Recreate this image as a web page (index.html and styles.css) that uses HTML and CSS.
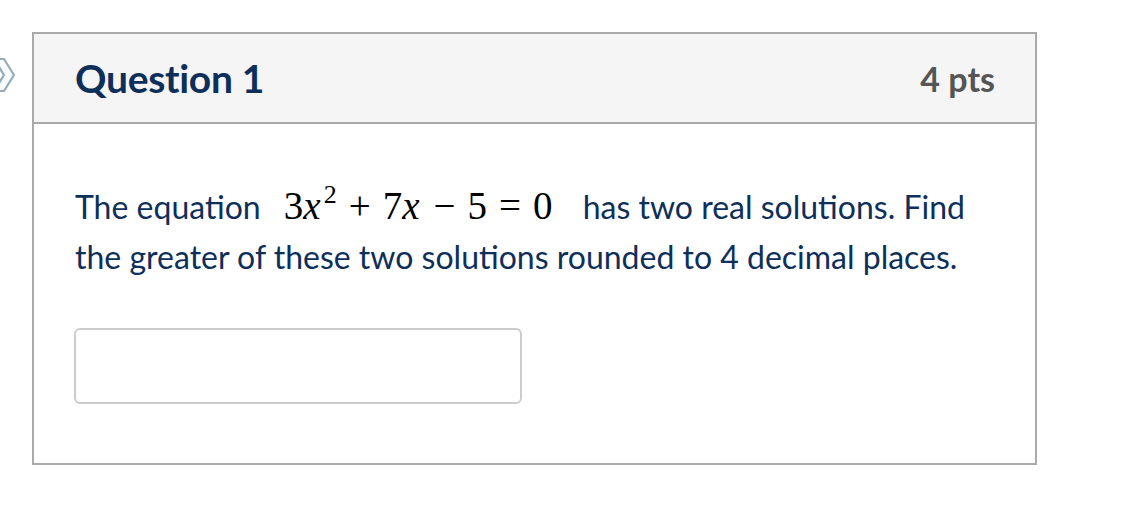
FILE: index.html
```html
<!DOCTYPE html>
<html>
<head>
<meta charset="utf-8">
<link rel="stylesheet" href="styles.css">
</head>
<body>
<div class="page">
  <svg class="chev" width="20" height="40" viewBox="0 0 20 40">
    <polygon points="-6,3 4,3 14,19 4,35 -6,35 4,19" fill="#fbfcfd" stroke="#94aabd" stroke-width="2.2" stroke-linejoin="round"/>
  </svg>
  <div class="question">
    <div class="q-header">
      <h2 class="q-title">Question 1</h2>
      <span class="q-pts">4 pts</span>
    </div>
    <div class="q-body">
      <p class="q-text">The equation <span class="math"><span>3<i>x</i><sup>2</sup></span><span class="op">+</span><span>7<i>x</i></span><span class="op">−</span><span>5</span><span class="op">=</span><span>0</span></span> has two real solutions. Find the greater of these two solutions rounded to 4 decimal places.</p>
      <div class="answer"></div>
    </div>
  </div>
</div>
</body>
</html>
```
FILE: styles.css
```css
* { box-sizing: border-box; }
html, body { margin: 0; padding: 0; background: #fff; }
body { font-family: Lato, "Liberation Sans", sans-serif; }
.page { position: relative; padding: 32px 0 0 32px; width: 1144px; height: 514px; }
.chev { position: absolute; left: 0; top: 56px; }
.question { width: 1005px; border: 2px solid #aaaaaa; }
.q-header {
  height: 90px;
  background: #f5f5f5;
  border-bottom: 2px solid #aaaaaa;
  display: flex;
  align-items: center;
  justify-content: space-between;
  padding: 0 40px 0 41px;
}
.q-title { margin: 0; font-size: 39px; font-weight: 700; color: #0e2f5a; letter-spacing: -0.3px; }
.q-pts { font-size: 34px; font-weight: 700; color: #555; }
.q-body { height: 339px; padding: 57px 40px 0 41px; }
.q-text { margin: 0; font-size: 32px; line-height: 50px; color: #0e2f5a; }
.math { font-family: "Liberation Serif", serif; font-size: 39px; color: #000; margin: 0 22px 0 15px; white-space: nowrap; }
.math i { font-style: italic; padding-right: 2px; }
.math .op { margin: 0 12px; }
.math sup { font-size: 26px; line-height: 0; vertical-align: 16px; padding-left: 1px; }
.answer { margin-top: 46px; margin-left: -1px; width: 448px; height: 76px; border: 2px solid #cccccc; border-radius: 6px; background: #fff; }
```
